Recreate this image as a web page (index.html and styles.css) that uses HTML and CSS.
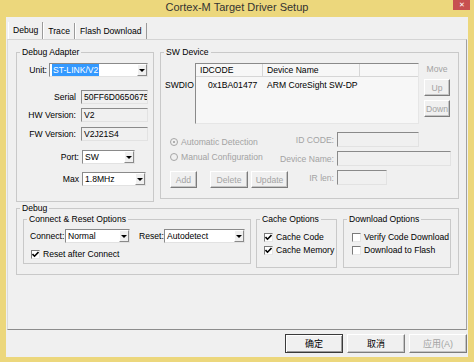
FILE: index.html
```html
<!DOCTYPE html>
<html lang="en">
<head>
    <meta charset="UTF-8">
    <meta name="viewport" content="width=device-width, initial-scale=1.0">
    <title>Cortex-M Target Driver Setup</title>
    <link rel="stylesheet" href="styles.css">
</head>
<body>
<div class="window">
    <div class="titlebar">
        <span></span>
        <span class="title">Cortex-M Target Driver Setup</span>
        <span class="close">&#x2715;</span>
    </div>

    <div class="client">
        <div class="tabs">
            <div class="tab active">Debug</div>
            <div class="tab">Trace</div>
            <div class="tab">Flash Download</div>
        </div>

        <div class="page">
            <div class="top-row">
                <fieldset class="group adapter">
                    <legend>Debug Adapter</legend>
                    <div class="row unit-row">
                        <label class="lbl w-unit-lbl">Unit:</label>
                        <div class="select w-unit"><span class="sel-text"><span class="hl">ST-LINK/V2</span></span><span class="arrow"></span></div>
                    </div>
                    <div class="row serial-row">
                        <label class="lbl w-info-lbl">Serial</label>
                        <div class="field ro w-info">50FF6D0650675454</div>
                    </div>
                    <div class="row hw-row">
                        <label class="lbl w-info-lbl">HW Version:</label>
                        <div class="field ro w-info">V2</div>
                    </div>
                    <div class="row fw-row">
                        <label class="lbl w-info-lbl">FW Version:</label>
                        <div class="field ro w-info">V2J21S4</div>
                    </div>
                    <div class="row port-row">
                        <label class="lbl w-port-lbl">Port:</label>
                        <div class="select w-port"><span class="sel-text">SW</span><span class="arrow"></span></div>
                    </div>
                    <div class="row max-row">
                        <label class="lbl w-port-lbl">Max</label>
                        <div class="select w-max"><span class="sel-text">1.8MHz</span><span class="arrow"></span></div>
                    </div>
                </fieldset>

                <fieldset class="group swdev">
                    <legend>SW Device</legend>
                    <div class="sw-top">
                        <div class="swdio">SWDIO</div>
                        <div class="list">
                            <div class="list-head">
                                <span class="col c1">IDCODE</span>
                                <span class="col c2">Device Name</span>
                                <span class="col c3"></span>
                            </div>
                            <div class="list-row">
                                <span class="cell c1 first">0x1BA01477</span>
                                <span class="cell c2">ARM CoreSight SW-DP</span>
                            </div>
                        </div>
                        <div class="side">
                            <span class="disabled move">Move</span>
                            <div class="btn disabled side-btn up">Up</div>
                            <div class="btn disabled side-btn down">Down</div>
                        </div>
                    </div>
                    <div class="sw-bottom">
                        <div class="sw-left">
                            <div class="radio-row disabled"><span class="radio on"></span>Automatic Detection</div>
                            <div class="radio-row disabled"><span class="radio"></span>Manual Configuration</div>
                            <div class="btn-row">
                                <div class="btn disabled b-add">Add</div>
                                <div class="btn disabled b-del">Delete</div>
                                <div class="btn disabled b-upd">Update</div>
                            </div>
                        </div>
                        <div class="sw-right">
                            <div class="row cfg-row">
                                <label class="lbl cfg-lbl disabled">ID CODE:</label>
                                <div class="field w-id"></div>
                            </div>
                            <div class="row cfg-row">
                                <label class="lbl cfg-lbl disabled">Device Name:</label>
                                <div class="field w-name"></div>
                            </div>
                            <div class="row cfg-row">
                                <label class="lbl cfg-lbl disabled">IR len:</label>
                                <div class="field w-ir"></div>
                            </div>
                        </div>
                    </div>
                </fieldset>
            </div>

            <fieldset class="group debug">
                <legend>Debug</legend>
                <div class="dbg-row">
                    <fieldset class="group connect">
                        <legend>Connect &amp; Reset Options</legend>
                        <div class="row conn-row">
                            <label class="lbl w-conn-lbl">Connect:</label>
                            <div class="select w-conn"><span class="sel-text">Normal</span><span class="arrow"></span></div>
                            <label class="lbl w-reset-lbl">Reset:</label>
                            <div class="select w-reset"><span class="sel-text">Autodetect</span><span class="arrow"></span></div>
                        </div>
                        <div class="check-row reset-check">
                            <span class="check on"><svg width="7" height="7" viewBox="0 0 7 7"><polyline points="0.5,3 2.5,5.2 6.5,1" fill="none" stroke="#000" stroke-width="1.6"/></svg></span>Reset after Connect
                        </div>
                    </fieldset>

                    <fieldset class="group cache">
                        <legend>Cache Options</legend>
                        <div class="check-row first-check">
                            <span class="check on"><svg width="7" height="7" viewBox="0 0 7 7"><polyline points="0.5,3 2.5,5.2 6.5,1" fill="none" stroke="#000" stroke-width="1.6"/></svg></span>Cache Code
                        </div>
                        <div class="check-row">
                            <span class="check on"><svg width="7" height="7" viewBox="0 0 7 7"><polyline points="0.5,3 2.5,5.2 6.5,1" fill="none" stroke="#000" stroke-width="1.6"/></svg></span>Cache Memory
                        </div>
                    </fieldset>

                    <fieldset class="group download">
                        <legend>Download Options</legend>
                        <div class="check-row first-check">
                            <span class="check"></span>Verify Code Download
                        </div>
                        <div class="check-row">
                            <span class="check"></span>Download to Flash
                        </div>
                    </fieldset>
                </div>
            </fieldset>
        </div>

        <div class="footer">
            <div class="btn dlg default">确定</div>
            <div class="btn dlg">取消</div>
            <div class="btn dlg disabled">应用(A)</div>
        </div>
    </div>
</div>
</body>
</html>
```

FILE: styles.css
```css
body {
    margin: 0;
    background-color: #ecd77c;
    font-family: "Liberation Sans", Arial, sans-serif;
    font-size: 8.6px;
    color: #000;
}
.window {
    width: 474px;
    height: 362px;
    display: flex;
    flex-direction: column;
}
.titlebar {
    height: 17px;
    display: grid;
    grid-template-columns: 1fr auto 1fr;
    align-items: start;
}
.title {
    font-size: 11px;
    line-height: 15px;
    color: #333;
}
.close {
    justify-self: end;
    width: 17px;
    height: 10px;
    margin-right: 4px;
    background: #c75050;
    color: #fff;
    font-size: 7px;
    line-height: 10px;
    text-align: center;
}
.client {
    flex: 1;
    margin: 0 6px 5px 6px;
    background: #f0f0f0;
    display: flex;
    flex-direction: column;
}
.tabs {
    display: flex;
    height: 17px;
    margin: 5px 0 0 2px;
}
.tab {
    padding: 0 4px 0 4px;
    line-height: 16px;
    margin-top: 1px;
    border-left: 1px solid #fff;
    border-right: 1px solid #9a9a9a;
    white-space: nowrap;
}
.tab.active {
    margin-top: 0;
    line-height: 17px;
}
.page {
    margin: 0 1px;
    height: 291px;
    box-sizing: border-box;
    border: 1px solid;
    border-color: #d4d4d4 #a0a0a0 #8c8c8c #dadada;
    padding: 7px 7px 0 8px;
}
.top-row {
    display: flex;
    align-items: flex-start;
}

/* group boxes */
fieldset.group {
    margin: 0;
    padding: 0;
    border: 1px solid #c9c9c9;
    box-sizing: border-box;
    min-width: 0;
}
legend {
    margin-left: 3px;
    padding: 0 2px;
    line-height: 11px;
    white-space: nowrap;
}
.adapter {
    width: 138px;
    height: 155px;
}
.swdev {
    width: 299px;
    height: 152px;
    margin-left: 6px !important;
}
.debug {
    width: 443px;
    height: 72px;
    margin-top: 1px !important;
}

/* rows and labels */
.row {
    display: flex;
    align-items: center;
}
.lbl {
    text-align: right;
    white-space: nowrap;
    flex-shrink: 0;
}
.unit-row { margin-top: 5px; }
.serial-row { margin-top: 13px; }
.hw-row { margin-top: 4px; }
.fw-row { margin-top: 5px; }
.port-row { margin-top: 9px; }
.max-row { margin-top: 8px; }
.w-unit-lbl { width: 30px; margin-right: 2px; }
.w-info-lbl { width: 59px; margin-right: 5px; }
.w-port-lbl { width: 62px; margin-right: 3px; }
.w-unit { width: 99px; }
.w-info { width: 67px; }
.w-port { width: 53px; }
.w-max { width: 64px; }

/* edit boxes and combo boxes */
.field {
    height: 15px;
    box-sizing: border-box;
    border: 1px solid;
    border-color: #8a8a8a #e2e2e2 #e2e2e2 #8a8a8a;
    background: #f0f0f0;
    padding-left: 2px;
    line-height: 13px;
    overflow: hidden;
    white-space: nowrap;
}
.field.ro {
    height: 14px;
    line-height: 12px;
}
.select {
    display: flex;
    height: 14px;
    box-sizing: border-box;
    border: 1px solid;
    border-color: #8a8a8a #e2e2e2 #e2e2e2 #8a8a8a;
    background: #fff;
    flex-shrink: 0;
}
.sel-text {
    flex: 1;
    padding-left: 2px;
    line-height: 12px;
    white-space: nowrap;
    overflow: hidden;
}
.hl {
    background: #3399ff;
    color: #fff;
    padding: 0 1px;
    display: inline-block;
    line-height: 12px;
}
.arrow {
    width: 10px;
    box-sizing: border-box;
    border: 1px solid;
    border-color: #fff #8a8a8a #8a8a8a #fff;
    background: #f0f0f0;
    display: flex;
    align-items: center;
    justify-content: center;
}
.arrow::after {
    content: "";
    border-top: 3px solid #000;
    border-left: 3px solid transparent;
    border-right: 3px solid transparent;
}

/* buttons */
.btn {
    box-sizing: border-box;
    border: 1px solid;
    border-color: #fff #7c7c7c #7c7c7c #fff;
    box-shadow: inset -1px -1px 0 #c4c4c4;
    background: #f0f0f0;
    display: flex;
    align-items: center;
    justify-content: center;
    white-space: nowrap;
}
.disabled {
    color: #a3a3a3;
}

/* SW device */
.sw-top {
    display: flex;
    margin-top: 5px;
}
.swdio {
    width: 34px;
    flex-shrink: 0;
    box-sizing: border-box;
    padding: 16px 0 0 4px;
    font-size: 8.5px;
    line-height: 12px;
    white-space: nowrap;
}
.list {
    width: 224px;
    height: 61px;
    box-sizing: border-box;
    border: 1px solid;
    border-color: #8a8a8a #e6e6e6 #e6e6e6 #8a8a8a;
    background: #f7f7f7;
}
.list-head {
    display: flex;
    height: 12px;
    border-bottom: 1px solid #d6d6d6;
}
.col {
    box-sizing: border-box;
    padding-left: 4px;
    line-height: 12px;
    border-right: 1px solid #d6d6d6;
}
.list-row {
    display: flex;
    margin-top: 2px;
    line-height: 12px;
}
.cell {
    box-sizing: border-box;
    padding-left: 4px;
    white-space: nowrap;
}
.cell.first {
    padding-left: 12px;
}
.c1 { width: 67px; }
.c2 { width: 97px; }
.c3 { flex: 1; border-right: none; }
.side {
    width: 26px;
    margin-left: 5px;
    display: flex;
    flex-direction: column;
    align-items: center;
}
.move {
    line-height: 12px;
}
.side-btn {
    width: 26px;
    height: 17px;
    margin-top: 4px;
}
.sw-bottom {
    display: flex;
}
.sw-left {
    width: 106px;
    flex-shrink: 0;
    margin-left: 9px;
    margin-top: 10px;
}
.radio-row {
    display: flex;
    align-items: center;
    height: 15px;
    white-space: nowrap;
}
.radio {
    width: 8px;
    height: 8px;
    box-sizing: border-box;
    border: 1px solid #a6a6a6;
    border-radius: 50%;
    background: #f0f0f0;
    margin-right: 3px;
    display: flex;
    align-items: center;
    justify-content: center;
}
.radio.on::after {
    content: "";
    width: 2px;
    height: 2px;
    border-radius: 50%;
    background: #9a9a9a;
}
.btn-row {
    display: flex;
    margin-top: 7px;
}
.btn-row .btn {
    height: 17px;
    flex-shrink: 0;
}
.b-add { width: 27px; }
.b-del { width: 38px; margin-left: 13px; }
.b-upd { width: 37px; margin-left: 3px; }
.sw-right {
    margin-top: 8px;
}
.cfg-row {
    margin-bottom: 4px;
}
.cfg-lbl {
    width: 58px;
    margin-right: 3px;
}
.w-id { width: 82px; }
.w-name { width: 114px; }
.w-ir { width: 50px; }

/* Debug group */
.dbg-row {
    display: flex;
    padding-left: 6px;
}
.connect {
    width: 228px;
    height: 50px;
}
.cache {
    width: 81px;
    height: 54px;
    margin-left: 5px !important;
}
.download {
    width: 108px;
    height: 54px;
    margin-left: 6px !important;
}
.conn-row {
    margin-top: 4px;
}
.w-conn-lbl { width: 34px; margin-left: 6px; margin-right: 1px; }
.w-conn { width: 65px; }
.w-reset-lbl { width: 24px; margin-left: 9px; margin-right: 1px; }
.w-reset { width: 81px; }
.check-row {
    display: flex;
    align-items: center;
    line-height: 12px;
    height: 12px;
    white-space: nowrap;
    overflow: hidden;
    margin-left: 7px;
    margin-top: 1px;
}
.check-row.first-check {
    margin-top: 6px;
}
.reset-check {
    margin-top: 5px;
}
.download .check-row {
    margin-left: 8px;
}
.check {
    width: 9px;
    height: 9px;
    box-sizing: border-box;
    border: 1px solid;
    border-color: #7a7a7a #e6e6e6 #e6e6e6 #7a7a7a;
    background: #fff;
    margin-right: 3px;
    display: flex;
    align-items: center;
    justify-content: center;
    flex-shrink: 0;
}

/* dialog buttons */
.footer {
    display: flex;
    justify-content: flex-end;
    gap: 4px;
    padding: 4px 1px 0 0;
}
.dlg {
    width: 58px;
    height: 19px;
    font-family: "Liberation Sans", "Noto Sans CJK SC", sans-serif;
    font-size: 9px;
}
.dlg.default {
    border-color: #3a3a3a;
    box-shadow: inset 1px 1px 0 #fff, inset -1px -1px 0 #9a9a9a;
}
```
